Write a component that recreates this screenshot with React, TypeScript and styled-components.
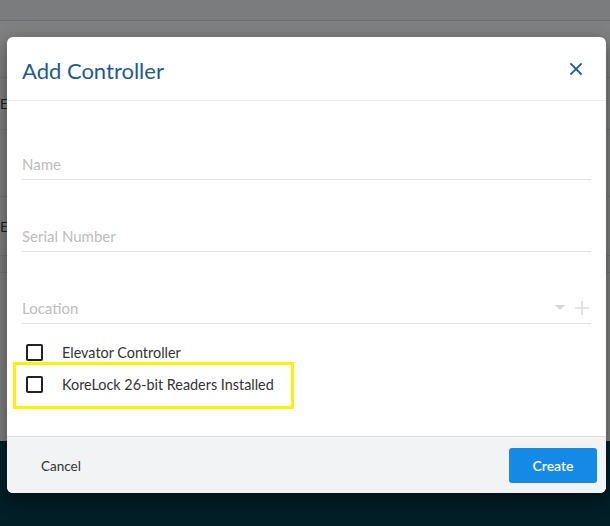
import React from 'react';
import styled, { createGlobalStyle } from 'styled-components';

const GlobalStyle = createGlobalStyle`
  html, body {
    margin: 0;
    padding: 0;
  }
  body {
    font-family: Lato, "Open Sans", "Liberation Sans", sans-serif;
  }
  * {
    box-sizing: border-box;
  }
`;

const Page = styled.div`
  position: relative;
  width: 610px;
  height: 526px;
  overflow: hidden;
  display: flex;
  flex-direction: column;
  background: #808182;
`;

const TopBand = styled.div`
  height: 21px;
  background: #7b7c7d;
  border-bottom: 1px solid #707172;
`;

const BgRow = styled.div<{ h: number; shade?: string }>`
  height: ${({ h }) => h}px;
  background: ${({ shade }) => shade || '#808182'};
  border-bottom: 1px solid #747576;
  display: flex;
  align-items: center;
  font-size: 14px;
  color: #1e1e1e;
`;

const BgFill = styled.div`
  flex: 1;
  background: #808182;
`;

const BgFooter = styled.div`
  height: 85px;
  background: #021e27;
`;

const Dialog = styled.div`
  position: absolute;
  left: 7px;
  top: 37px;
  width: 599px;
  height: 456px;
  background: #fff;
  border-radius: 6px;
  box-shadow: 0 6px 18px rgba(0, 0, 0, 0.45);
  display: flex;
  flex-direction: column;
  overflow: hidden;
`;

const Header = styled.div`
  height: 64px;
  flex: none;
  padding: 0 15px;
  display: flex;
  align-items: center;
  justify-content: space-between;
  border-bottom: 1px solid #eeeeee;
`;

const Title = styled.h2`
  margin: 4px 0 0;
  font-size: 22px;
  font-weight: 400;
  color: #1b5b93;
`;

const CloseButton = styled.button`
  width: 24px;
  height: 24px;
  margin-right: 3px;
  padding: 0;
  border: none;
  background: transparent;
  display: flex;
  align-items: center;
  justify-content: center;
  cursor: pointer;
`;

const Body = styled.div`
  flex: 1;
  position: relative;
  padding: 7px 15px 0;
  display: flex;
  flex-direction: column;
`;

const Field = styled.div`
  height: 72px;
  display: flex;
  flex-direction: column;
  justify-content: flex-end;
`;

const InputRow = styled.div`
  height: 31px;
  display: flex;
  align-items: center;
  border-bottom: 1px solid #e0e0e0;
  padding-bottom: 1px;
`;

const Placeholder = styled.span`
  flex: 1;
  font-size: 15px;
  color: #bdbdbd;
`;

const FieldIcons = styled.div`
  display: flex;
  align-items: center;
  gap: 10px;
  margin-right: 2px;
`;

const Checks = styled.div`
  margin-top: 12px;
  display: flex;
  flex-direction: column;
`;

const CheckRow = styled.label`
  height: 32px;
  display: flex;
  align-items: center;
  padding-left: 4px;
  gap: 19px;
  font-size: 14.4px;
  color: #333;
`;

const Box = styled.span`
  width: 17px;
  height: 17px;
  border: 2px solid #222;
  border-radius: 2px;
  background: #fff;
`;

const Highlight = styled.div`
  position: absolute;
  left: 6px;
  top: 261px;
  width: 281px;
  height: 47px;
  border: 3px solid #fff200;
  pointer-events: none;
`;

const Footer = styled.div`
  height: 57px;
  flex: none;
  background: #f2f3f5;
  border-top: 1px solid #d9dce1;
  display: flex;
  align-items: center;
  justify-content: space-between;
  padding: 0 9px 0 34px;
`;

const CancelButton = styled.button`
  border: none;
  background: transparent;
  padding: 0;
  font-family: inherit;
  font-size: 13.5px;
  color: #333;
  margin-top: 2px;
`;

const CreateButton = styled.button`
  width: 88px;
  height: 35px;
  border: none;
  border-radius: 3px;
  background: #1589e6;
  color: #fff;
  font-family: inherit;
  font-size: 14px;
  font-weight: 600;
`;

export default function App() {
  return (
    <>
      <GlobalStyle />
      <Page>
        <TopBand />
        <BgRow h={57} />
        <BgRow h={52}>E</BgRow>
        <BgRow h={67} />
        <BgRow h={59}>E</BgRow>
        <BgRow h={17} shade="#7d7e7f" />
        <BgFill />
        <BgFooter />
        <Dialog>
          <Header>
            <Title>Add Controller</Title>
            <CloseButton aria-label="Close">
              <svg width="12" height="12" viewBox="0 0 12 12">
                <path d="M1 1L11 11M11 1L1 11" stroke="#1b5b93" strokeWidth="1.8" strokeLinecap="square" />
              </svg>
            </CloseButton>
          </Header>
          <Body>
            <Field>
              <InputRow>
                <Placeholder>Name</Placeholder>
              </InputRow>
            </Field>
            <Field>
              <InputRow>
                <Placeholder>Serial Number</Placeholder>
              </InputRow>
            </Field>
            <Field>
              <InputRow>
                <Placeholder>Location</Placeholder>
                <FieldIcons>
                  <svg width="10" height="6" viewBox="0 0 10 6">
                    <path d="M0 0H10L5 5Z" fill="#d6d6d6" />
                  </svg>
                  <svg width="14" height="14" viewBox="0 0 14 14">
                    <path d="M7 0V14M0 7H14" stroke="#dcdcdc" strokeWidth="1.6" />
                  </svg>
                </FieldIcons>
              </InputRow>
            </Field>
            <Checks>
              <CheckRow>
                <Box />
                Elevator Controller
              </CheckRow>
              <CheckRow>
                <Box />
                KoreLock 26-bit Readers Installed
              </CheckRow>
            </Checks>
            <Highlight />
          </Body>
          <Footer>
            <CancelButton>Cancel</CancelButton>
            <CreateButton>Create</CreateButton>
          </Footer>
        </Dialog>
      </Page>
    </>
  );
}
